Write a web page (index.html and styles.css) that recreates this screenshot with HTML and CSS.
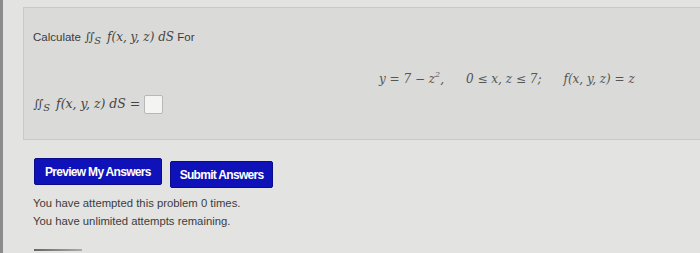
FILE: index.html
```html
<!DOCTYPE html>
<html>
<head>
<meta charset="utf-8">
<link rel="stylesheet" href="styles.css">
</head>
<body>
<div class="page">
  <div class="problem">
    <p class="intro">Calculate <span class="math"><span class="int">∬</span><sub>S</sub> f(x, y, z) dS</span> For</p>
    <p class="display math">
      <span>y = 7 − z<sup>2</sup>,</span>
      <span>0 ≤ x, z ≤ 7;</span>
      <span>f(x, y, z) = z</span>
    </p>
    <p class="answer"><span class="math"><span class="int">∬</span><sub>S</sub> f(x, y, z) dS =</span><span class="box"></span></p>
  </div>
  <div class="buttons">
    <button class="btn">Preview My Answers</button>
    <button class="btn btn2">Submit Answers</button>
  </div>
  <div class="attempts">
    <div>You have attempted this problem 0 times.</div>
    <div>You have unlimited attempts remaining.</div>
  </div>
  <div class="next"></div>
</div>
</body>
</html>
```

FILE: styles.css
```css
html, body {
  margin: 0;
  padding: 0;
}
body {
  width: 700px;
  height: 253px;
  overflow: hidden;
  background: #e3e3e1;
  font-family: "Liberation Sans", Arial, sans-serif;
  color: #3a3a3a;
  border-left: 3px solid #8c8c8c;
  box-sizing: border-box;
}
.page {
  padding-left: 20px;
}
.problem {
  margin-top: 7px;
  height: 133px;
  background: #dadad8;
  border: 1px solid #c9c9c7;
  border-right: none;
  box-sizing: border-box;
  padding: 0 0 0 9px;
}
.problem p {
  margin: 0;
}
.intro {
  padding-top: 22px;
  font-size: 11.5px;
}
.math {
  font-family: "DejaVu Serif", serif;
  font-style: italic;
  font-size: 12px;
  color: #444;
}
.int {
  font-style: normal;
  font-size: 12px;
}
.math sub {
  font-size: 10px;
  vertical-align: -3px;
  margin-right: 2px;
}
.math sup {
  font-size: 8px;
  vertical-align: 6px;
  line-height: 0;
}
.display {
  display: flex;
  gap: 22px;
  margin-left: 346px !important;
  margin-top: 26px !important;
  color: #555;
}
.answer {
  margin-top: 9px !important;
  display: flex;
  align-items: center;
}
.answer .math {
  font-size: 12.5px;
}
.box {
  display: inline-block;
  width: 17px;
  height: 17px;
  margin-left: 4px;
  background: #f4f4f2;
  border: 1px solid #b8b8b6;
  border-radius: 2px;
}
.buttons {
  display: flex;
  gap: 8px;
  margin-top: 18px;
  padding-left: 11px;
  align-items: flex-start;
}
.btn {
  font-family: "Liberation Sans", Arial, sans-serif;
  font-weight: bold;
  font-size: 12px;
  letter-spacing: -0.7px;
  color: #fff;
  background: #0f12b8;
  border: 1px solid #0a0c8a;
  border-radius: 2px;
  height: 27px;
  padding: 0 10px;
}
.btn2 {
  margin-top: 3px;
  padding: 0 9px;
}
.attempts {
  margin-top: 6px;
  padding-left: 10px;
  font-size: 11.3px;
  line-height: 18px;
  color: #3c3c3c;
}
.next {
  margin: 19px 0 0 11px;
  width: 48px;
  height: 2px;
  background: linear-gradient(to right, #666, #aaa);
}
```
